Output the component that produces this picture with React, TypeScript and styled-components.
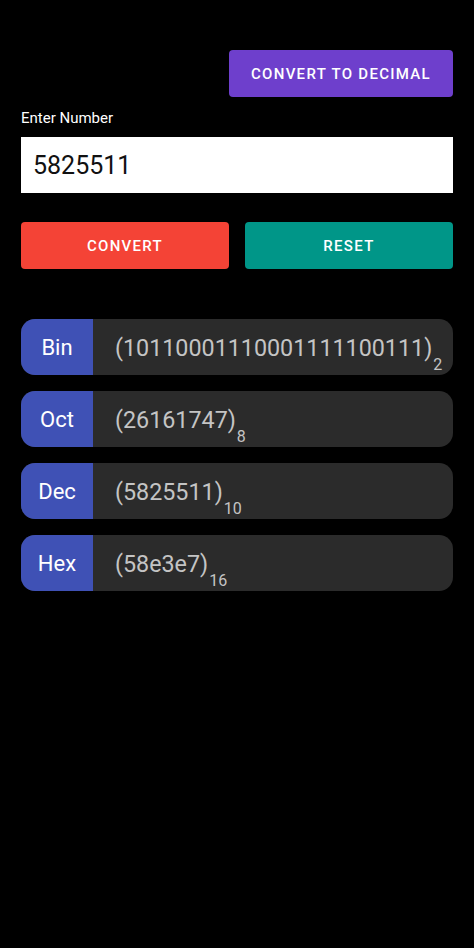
import React from "react";
import styled, { createGlobalStyle } from "styled-components";

const GlobalStyle = createGlobalStyle`
    html, body {
        margin: 0;
        padding: 0;
        background: #000;
    }
    body {
        font-family: Roboto, "Liberation Sans", sans-serif;
    }
`;

interface Result {
    label: string;
    value: string;
    base: number;
}

const results: Result[] = [
    { label: "Bin", value: "10110001110001111100111", base: 2 },
    { label: "Oct", value: "26161747", base: 8 },
    { label: "Dec", value: "5825511", base: 10 },
    { label: "Hex", value: "58e3e7", base: 16 },
];

const App: React.FC = () => {
    return (
        <Page>
            <GlobalStyle />
            <TopBar>
                <ModeButton>Convert to decimal</ModeButton>
            </TopBar>
            <FieldLabel>Enter Number</FieldLabel>
            <NumberInput defaultValue="5825511" />
            <ActionRow>
                <ActionButton $color="#f44336">Convert</ActionButton>
                <ActionButton $color="#009688">Reset</ActionButton>
            </ActionRow>
            <ResultList>
                {results.map((r) => (
                    <ResultRow key={r.label}>
                        <BaseTag>{r.label}</BaseTag>
                        <ResultValue>
                            ({r.value})<Sub>{r.base}</Sub>
                        </ResultValue>
                    </ResultRow>
                ))}
            </ResultList>
        </Page>
    );
};

export default App;

const Page = styled.div`
    min-height: 948px;
    box-sizing: border-box;
    padding: 50px 21px 0 21px;
    background: #000;
    display: flex;
    flex-direction: column;
`;

const TopBar = styled.div`
    display: flex;
    justify-content: flex-end;
`;

const ModeButton = styled.button`
    width: 224px;
    height: 47px;
    border: none;
    border-radius: 4px;
    background: #6e3fcc;
    color: #fff;
    font-family: Roboto, "Liberation Sans", sans-serif;
    font-weight: 500;
    font-size: 15px;
    letter-spacing: 1.3px;
    text-transform: uppercase;
`;

const FieldLabel = styled.div`
    margin-top: 12px;
    color: #fff;
    font-size: 15px;
    line-height: 18px;
`;

const NumberInput = styled.input`
    margin-top: 10px;
    height: 56px;
    box-sizing: border-box;
    border: none;
    outline: none;
    background: #fff;
    color: #111;
    padding: 0 12px;
    font-family: Roboto, "Liberation Sans", sans-serif;
    font-size: 25px;
`;

const ActionRow = styled.div`
    margin-top: 29px;
    display: grid;
    grid-template-columns: 1fr 1fr;
    gap: 16px;
`;

const ActionButton = styled.button<{ $color: string }>`
    height: 47px;
    border: none;
    border-radius: 4px;
    background: ${(p) => p.$color};
    color: #fff;
    font-family: Roboto, "Liberation Sans", sans-serif;
    font-weight: 500;
    font-size: 15px;
    letter-spacing: 1.3px;
    text-transform: uppercase;
`;

const ResultList = styled.div`
    margin-top: 50px;
    display: flex;
    flex-direction: column;
    gap: 16px;
`;

const ResultRow = styled.div`
    display: flex;
    height: 56px;
    border-radius: 14px;
    overflow: hidden;
    background: #2b2b2b;
`;

const BaseTag = styled.div`
    width: 72px;
    flex-shrink: 0;
    background: #3f51b5;
    color: #fff;
    font-size: 22px;
    display: flex;
    align-items: center;
    justify-content: center;
`;

const ResultValue = styled.div`
    padding: 2px 0 0 22px;
    display: flex;
    align-items: center;
    color: #c4c4c4;
    font-size: 23.3px;
    white-space: nowrap;
`;

const Sub = styled.span`
    font-size: 16px;
    align-self: flex-end;
    margin-bottom: 1px;
    margin-left: 1px;
`;
